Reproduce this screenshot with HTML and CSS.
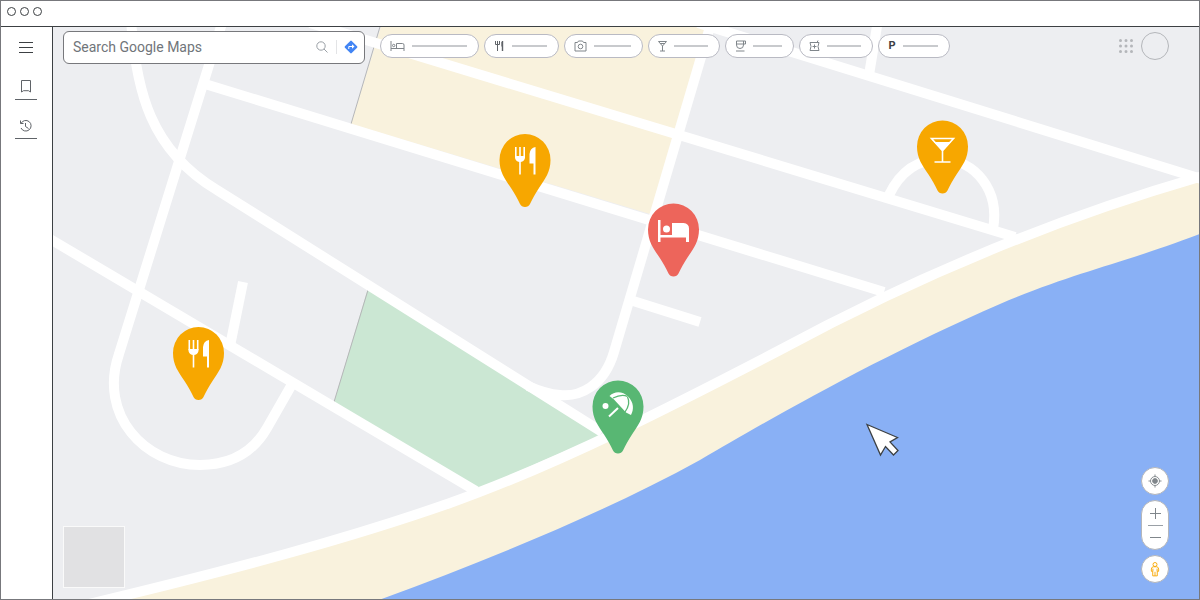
FILE: index.html
```
<!DOCTYPE html>
<html lang="en">
<head>
  <meta charset="UTF-8" />
  <meta name="viewport" content="width=device-width, initial-scale=1.0"/>
  <title>Google Maps</title>
  <link rel="stylesheet" href="styles.css">
</head>
<body>

<div class="window">
  <header class="titlebar">
    <span></span><span></span><span></span>
  </header>

  <nav class="sidebar">
    <button class="menu" aria-label="Menu">
      <svg width="16" height="12" viewBox="0 0 16 12"><path d="M1 .500H15M1 5.500H15M1 10.500H15"/></svg>
    </button>
    <button class="saved" aria-label="Saved">
      <svg width="12" height="14" viewBox="0 0 12 14"><path d="M1.500 1.500H10.500V13L8.500 11.700H3.500L1.500 13Z"/></svg>
    </button>
    <button class="recent" aria-label="Recents">
      <svg width="14" height="14" viewBox="0 0 14 14"><path d="M1.500 1.500V4.500H4.500M2 4.500A5.300 5.300 0 1 1 2 9M6.500 4V7.500L9.500 9.500"/></svg>
    </button>
  </nav>

  <main class="map">
    <svg class="map-canvas" viewBox="53 27 1146 572" preserveAspectRatio="xMidYMid slice">
      <defs>
        <path id="pin" d="M-25.500 0A25.500 26 0 1 1 25.500 0C25.500 12 20 19 14 28C10 34 8 38 5 44Q3.500 47 0 47Q-3.500 47 -5 44C-8 38 -10 34 -14 28C-20 19 -25.500 12 -25.500 0Z"/>
        <g id="food">
          <path d="M-9.200 -13V-3M-5 -13V14.500M-.800 -13V-3" fill="none" stroke="#fff" stroke-width="1.600"/>
          <path d="M-10 -4H0V-2Q-1 2 -5 2Q-9 2 -10 -2Z"/>
          <path d="M10.500 -13V14.500H8.500V3.500H4.500V-6Q5 -12 10.500 -13Z"/>
        </g>
      </defs>

      <rect class="land" x="0" y="0" width="1300" height="700"/>
      <path class="sand" d="M383 20L351 124L650 214L708 20Z"/>
      <path class="edge" d="M382 20L351 124"/>

      <!-- coast -->
      <path class="sand" d="M105 600C240 568 350 538 450 503C560 464 680 402 780 350C880 296 1030 225 1210 174V610H90Z"/>
      <path class="water" d="M368 604C480 563 600 515 700 460C770 419 880 356 1000 304C1080 270 1120 265 1210 230V610H368Z"/>
      <path class="park" d="M368 288L602 435L478 489L334 402Z"/>
      <path class="edge" d="M368 290L334 402"/>

      <!-- roads -->
      <g class="roads">
        <path d="M85 605C240 568 350 538 450 503C560 464 680 402 780 350C880 296 1030 225 1210 174"/>
        <path d="M310 23L1015 237"/>
        <path d="M205 84L884 292"/>
        <path d="M698 23L1205 180"/>
        <path d="M878 20L869 75"/>
        <path d="M712 20L614 352C604 386 580 397 560 395Q546 394 528 386"/>
        <path d="M131 20C136 90 150 150 217 190L602 432"/>
        <path d="M223 20L119 354C98 415 145 465 200 465C235 465 255 449 267 428L291 386"/>
        <path d="M45 236L476 491"/>
        <path d="M243 282L230 346"/>
        <path d="M630 300L700 322"/>
        <path d="M889 195C902 168 922 159 942 159C975 160 1000 190 993 229"/>
      </g>

      <g class="pin orange" transform="translate(525 160)">
        <use href="#pin"/><use class="glyph" href="#food"/>
      </g>
      <g class="pin orange" transform="translate(198.500 353)">
        <use href="#pin"/><use class="glyph" href="#food"/>
      </g>
      <g class="pin orange" transform="translate(942.500 146.500)">
        <use href="#pin"/>
        <g class="glyph">
          <path d="M-11 -8H11L0 4ZM0 3V15M-8 15.500H8" fill="none" stroke="#fff" stroke-width="1.600"/>
          <path d="M-8.500 -4.500H8.500L0 5Z"/>
        </g>
      </g>
      <g class="pin red" transform="translate(673.500 229.500)">
        <use href="#pin"/>
        <g class="glyph">
          <path d="M-15.500 -9.500H-13V5.500H-1.500V-6.500H10Q15.500 -6 15.500 -1V12.500H12.500V8H-13V12.500H-15.500Z"/>
          <circle cx="-7" cy="-.500" r="3.500"/>
        </g>
      </g>
      <g class="pin green" transform="translate(618 406.500)">
        <use href="#pin"/>
        <g class="glyph">
          <circle cx="-12.500" cy="-.500" r="3"/>
          <path d="M-9 10L0 1.500" fill="none" stroke="#fff" stroke-width="2"/>
          <path d="M-8.500 -10.500C-3 -16 5 -15 10 -10C16 -4 16 3 13 8.500L8 6L-4 -7Z"/>
          <path d="M-5 -8.500Q4 -13 9.500 -10M9.500 -9.500Q13 -3 7 5.500" fill="none" stroke="#58b773" stroke-width="1.300"/>
        </g>
      </g>

      <path class="cursor" d="M867 424.500L897.500 437.500L890 442L898 450.500L893.500 455L885.500 446.500L880.500 455Z"/>
    </svg>

    <div class="topbar">
      <form class="search">
        <input type="text" aria-label="Search Google Maps" placeholder="Search Google Maps">
        <button type="submit" aria-label="Search">
          <svg width="12" height="12" viewBox="0 0 12 12"><circle cx="5" cy="5" r="4.200"/><path d="M8 8L11.500 11.500"/></svg>
        </button>
        <button type="button" class="directions" aria-label="Directions">
          <svg width="14" height="14" viewBox="0 0 14 14"><rect x="2.200" y="2.200" width="9.600" height="9.600" rx="1" transform="rotate(45 7 7)" fill="#4285f4"/><path d="M4.800 9V6.500H9" fill="none" stroke="#fff"/><path d="M8 4.300L10.500 6.500L8 8.700Z" fill="#fff"/></svg>
        </button>
      </form>

      <div class="chips">
        <button class="chip hotels" aria-label="Hotels">
          <svg width="15" height="10" viewBox="0 0 15 10"><path d="M1 0V10M1 7.500H14M14 10V4Q14 2.500 12.500 2.500H6.500V7.500"/><circle cx="3.700" cy="4.500" r="1.200"/></svg><i></i>
        </button>
        <button class="chip restaurants" aria-label="Restaurants">
          <svg width="11" height="12" viewBox="0 0 11 12"><path d="M1.500 1V4.500M3.500 1V11M5.500 1V4.500M1.500 4.500H5.500" stroke="#5f6368"/><path d="M8.500 1V11M8 2V6.500" stroke="#5f6368" stroke-width="1.400"/></svg><i></i>
        </button>
        <button class="chip sights" aria-label="Attractions">
          <svg width="13" height="12" viewBox="0 0 13 12"><path d="M1 2.500H3.500L4.500 1H8.500L9.500 2.500H12V11H1Z"/><circle cx="6.500" cy="6.500" r="2.300"/></svg><i></i>
        </button>
        <button class="chip bars" aria-label="Bars">
          <svg width="9" height="12" viewBox="0 0 9 12"><path d="M.500 1.500H8.500L4.500 6ZM2 3.500H7M4.500 6V11M2 11H7"/></svg><i></i>
        </button>
        <button class="chip coffee" aria-label="Coffee">
          <svg width="11" height="12" viewBox="0 0 11 12"><path d="M1.500 1H10.500V4H8.500M1.500 1V5Q1.500 8.500 5 8.500Q8.500 8.500 8.500 5V1M1.500 4H8.500M1 11H9.500"/></svg><i></i>
        </button>
        <button class="chip pharmacies" aria-label="Pharmacies">
          <svg width="11" height="12" viewBox="0 0 11 12"><path d="M1 2.500H10L9 6.500L10 10.500H1L2 6.500ZM8 2.500L9 .500M5.500 4.500V8.500M3.500 6.500H7.500"/></svg><i></i>
        </button>
        <button class="chip parking" aria-label="Parking"><b>P</b><i></i></button>
      </div>

      <div class="account">
        <button class="apps" aria-label="Apps">
          <svg width="14" height="14" viewBox="0 0 14 14"><path d="M1.500 1.500H13M1.500 7H13M1.500 12.500H13"/></svg>
        </button>
        <button class="avatar" aria-label="Account"></button>
      </div>
    </div>

    <div class="bottombar">
      <button class="layers" aria-label="Layers"></button>
      <div class="controls">
        <button class="round" aria-label="Your location">
          <svg width="14" height="14" viewBox="0 0 15 15"><circle cx="7.500" cy="7.500" r="4.800"/><circle cx="7.500" cy="7.500" r="2.600" fill="#80868b"/><path d="M7.500 .500V3M7.500 12V14.500M.500 7.500H3M12 7.500H14.500"/></svg>
        </button>
        <div class="zoom">
          <button aria-label="Zoom in"><svg width="11" height="11" viewBox="0 0 11 11"><path d="M0 5.500H11M5.500 0V11"/></svg></button>
          <button aria-label="Zoom out"><svg width="11" height="11" viewBox="0 0 11 11"><path d="M0 5.500H11"/></svg></button>
        </div>
        <button class="round pegman" aria-label="Street View">
          <svg width="10" height="17" viewBox="0 0 11 17"><circle cx="5.500" cy="3" r="2.200"/><path d="M3.500 5.500H7.500Q9.500 6 9.500 8V10.500H8V15.500H3V10.500H1.500V8Q1.500 6 3.500 5.500ZM3.200 7.500V10.500M7.800 7.500V10.500M5.500 11V15.500"/></svg>
        </button>
      </div>
    </div>
  </main>
</div>

</body>
</html>
```
FILE: styles.css
```
* {
  box-sizing: border-box;
}
body {
  margin: 0;
  font-family: Roboto, sans-serif;
}
button {
  margin: 0;
  padding: 0;
  border: none;
  background: none;
  font-family: inherit;
  cursor: pointer;
}
svg {
  display: block;
}
button svg {
  fill: none;
  stroke: #80868b;
  flex: none;
}
.window {
  display: grid;
  grid-template-columns: 52px 1fr;
  grid-template-rows: 26px 1fr;
  min-height: 100vh;
  border: 1px solid #77787c;
  background: #fff;
}
.titlebar {
  grid-column: 1 / 3;
  display: flex;
  align-items: center;
  gap: 4px;
  padding: 0 6px 4px;
  border-bottom: 1px solid #3c4043;
}
.titlebar span {
  width: 9px;
  height: 9px;
  border: 1px solid #3c4043;
  border-radius: 50%;
}

/* sidebar */
.sidebar {
  display: flex;
  flex-direction: column;
  align-items: center;
  padding: 15px 1px 0 0;
  border-right: 1px solid #3c4043;
}
.sidebar button {
  display: flex;
  justify-content: center;
  width: 22px;
}
.sidebar button svg {
  stroke: #5f6368;
}
.sidebar .menu svg {
  stroke: #3c4043;
}
.sidebar .saved, .sidebar .recent {
  padding-bottom: 6px;
  border-bottom: 1px solid #5f6368;
}
.sidebar .saved {
  margin-top: 25px;
}
.sidebar .recent {
  margin-top: 19px;
  padding-bottom: 5px;
}

/* map */
.map {
  position: relative;
  display: flex;
  flex-direction: column;
  justify-content: space-between;
  overflow: hidden;
}
.map-canvas {
  position: absolute;
  top: 0;
  left: 0;
  width: 100%;
  height: 100%;
}
.land { fill: #edeef1; }
.sand { fill: #f9f2dd; }
.water { fill: #89b0f5; }
.park { fill: #cbe7d3; }
.edge {
  fill: none;
  stroke: #b5b6b8;
}
.roads {
  fill: none;
  stroke: #fff;
  stroke-width: 10;
}
.orange { fill: #f7a700; }
.red { fill: #ed655b; }
.green { fill: #58b773; }
.glyph { fill: #fff; }
.cursor {
  fill: #fff;
  stroke: #3c4043;
  stroke-width: 1.300;
}

/* top bar */
.topbar {
  position: relative;
  display: flex;
  align-items: flex-start;
  padding: 4px 30px 0 10px;
}
.search {
  display: flex;
  align-items: center;
  width: 302px;
  height: 33px;
  padding: 0 6px 2px 9px;
  border: 1px solid #77787c;
  border-radius: 6px;
  background: #fff;
}
.search input {
  flex: 1;
  min-width: 0;
  padding: 0;
  border: none;
  outline: none;
  background: none;
  color: #70757a;
  font: 14px/20px Roboto, sans-serif;
}
.search input::placeholder {
  color: #70757a;
}
.search button svg {
  stroke: #9aa0a6;
}
.search .directions {
  margin-left: 8px;
  padding-left: 7px;
  border-left: 1px solid #e3e4e6;
}
.search .directions svg {
  stroke: none;
}
.chips {
  display: flex;
  gap: 5px;
  margin: 3px 0 0 15px;
}
.chip {
  display: flex;
  align-items: center;
  gap: 7px;
  height: 24px;
  padding: 0 11px 0 9px;
  border: 1px solid #b9bac3;
  border-radius: 12px;
  background: #fff;
}
.chip i {
  width: 35px;
  height: 2px;
  background: #c8cacd;
}
.chip.hotels i {
  width: 55px;
}
.chip.sights i {
  width: 37px;
}
.chip.bars i, .chip.pharmacies i {
  width: 34px;
}
.chip.coffee i {
  width: 29px;
}
.chip b {
  width: 8px;
  color: #3c4043;
  font-size: 11px;
  line-height: 12px;
}
.account {
  display: flex;
  align-items: center;
  gap: 8px;
  margin: 1px 0 0 auto;
}
.apps svg {
  stroke: #b4b6ba;
  stroke-width: 3;
  stroke-linecap: round;
  stroke-dasharray: 0 5.500;
}
.avatar {
  width: 28px;
  height: 28px;
  border: 1px solid #b4b6ba;
  border-radius: 50%;
}

/* bottom bar */
.bottombar {
  position: relative;
  display: flex;
  align-items: flex-end;
  justify-content: space-between;
  padding: 0 30px 11px 10px;
}
.layers {
  width: 62px;
  height: 62px;
  border: 1px solid #fafafa;
  background: #e1e1e3;
}
.controls {
  display: flex;
  flex-direction: column;
  gap: 5px;
  margin-bottom: 5px;
}
.round {
  display: flex;
  align-items: center;
  justify-content: center;
  width: 28px;
  height: 28px;
  border: 1px solid #b4b6ba;
  border-radius: 50%;
  background: #fff;
}
.zoom {
  display: flex;
  flex-direction: column;
  align-items: center;
  padding: 1px 0;
  border: 1px solid #b4b6ba;
  border-radius: 14px;
  background: #fff;
}
.zoom button {
  display: flex;
  align-items: center;
  justify-content: center;
  width: 15px;
  height: 23px;
}
.zoom button + button {
  border-top: 1px solid #9aa0a6;
}
.pegman svg {
  stroke: #f7a700;
}
```
